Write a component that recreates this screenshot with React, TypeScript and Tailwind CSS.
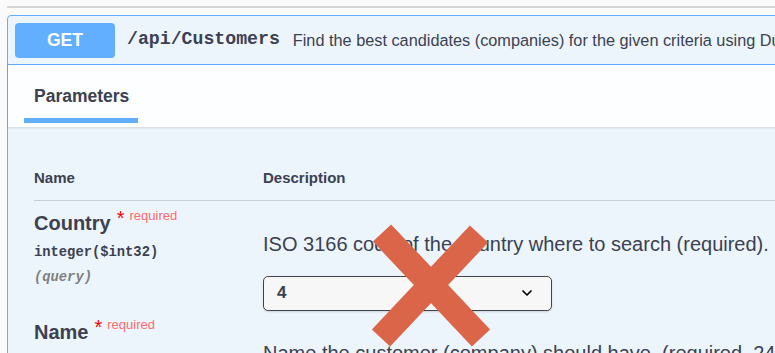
import { ChevronDown } from "lucide-react";

const sans = { fontFamily: '"Liberation Sans", Arial, sans-serif' };

function Required() {
  return (
    <span className="relative -top-[10px] ml-[6px] text-[13px] font-normal text-[#ff6a6a]">
      <span className="relative top-[5px] text-[20px] text-[#ff0000]">*</span>
      <span className="ml-[5px]">required</span>
    </span>
  );
}

export default function App() {
  return (
    <div className="relative h-[353px] w-[775px] overflow-hidden bg-[#fafafa] text-[#3b4151]" style={sans}>
      <div className="ml-[7px] mt-[6px] border-t-2 border-[#d4d4d4]" />

      <div className="ml-[7px] mt-[7px] w-[820px] rounded-[4px] border border-[#61affe] bg-[#edf5fc]">
        {/* summary */}
        <div className="flex h-[49px] items-center border-b border-[#61affe] pl-[7px]">
          <div className="flex h-[35px] w-[100px] shrink-0 items-center justify-center rounded-[4px] bg-[#61affe] text-[17.5px] font-bold text-white">
            GET
          </div>
          <span className="ml-[12px] shrink-0 font-['Liberation_Mono',monospace] text-[18.2px] font-bold text-[#3b4151]">
            /api/Customers
          </span>
          <span className="ml-[13px] whitespace-nowrap text-[16.3px]">
            Find the best candidates (companies) for the given criteria using Dun &amp; Bradstreet
          </span>
        </div>

        {/* tab header */}
        <div className="flex h-[62px] items-end bg-[#fdfeff] shadow-[0_1px_2px_rgba(0,0,0,0.12)]">
          <div className="mb-[4px] ml-[16px] flex w-[114px] flex-col">
            <span className="pl-[10px] text-[17.5px] font-bold leading-none">Parameters</span>
            <div className="mt-[13px] h-[5px] bg-[#61affe]" />
          </div>
        </div>

        {/* parameters table */}
        <div className="px-[26px] pt-[40px]">
          <div className="flex border-b border-[#c7ced8] pb-[10px] text-[15px] font-bold">
            <span className="w-[229px]">Name</span>
            <span>Description</span>
          </div>

          <div className="flex pt-[8px]">
            <div className="w-[229px] shrink-0">
              <div className="text-[20px] font-bold leading-[28px]">
                Country
                <Required />
              </div>
              <div className="mt-[3px] font-['Liberation_Mono',monospace] text-[13.8px] font-bold leading-[20px]">
                integer($int32)
              </div>
              <div className="mt-[5px] font-['Liberation_Mono',monospace] text-[13.8px] font-bold italic leading-[20px] text-[#808080]">
                (query)
              </div>
            </div>
            <div className="pt-[23px]">
              <div className="whitespace-nowrap text-[20px] leading-[24px]">
                ISO 3166 code of the country where to search (required).
              </div>
              <div className="mt-[20px] flex h-[35px] w-[289px] items-center justify-between rounded-[5px] border border-[#41444e] bg-[#f7f7f7] pl-[13px] pr-[16px] shadow-[0_1px_2px_rgba(0,0,0,0.15)]">
                <span className="text-[17px] font-bold">4</span>
                <ChevronDown className="h-[16px] w-[16px] text-black" strokeWidth={2.6} />
              </div>
            </div>
          </div>

          <div className="flex pt-[7px]">
            <div className="w-[229px] shrink-0">
              <div className="text-[20px] font-bold leading-[28px]">
                Name
                <Required />
              </div>
            </div>
            <div className="pt-[23px]">
              <div className="whitespace-nowrap text-[20px] leading-[24px]">
                Name the customer (company) should have. (required, 240 max)
              </div>
            </div>
          </div>
        </div>
      </div>

      {/* red cross overlay */}
      <svg className="absolute left-0 top-0" width="775" height="353" viewBox="0 0 775 353">
        <line x1="382" y1="233" x2="481" y2="338" stroke="#da6548" strokeWidth="25" />
        <line x1="479" y1="234" x2="381" y2="338" stroke="#da6548" strokeWidth="25" />
      </svg>
    </div>
  );
}
